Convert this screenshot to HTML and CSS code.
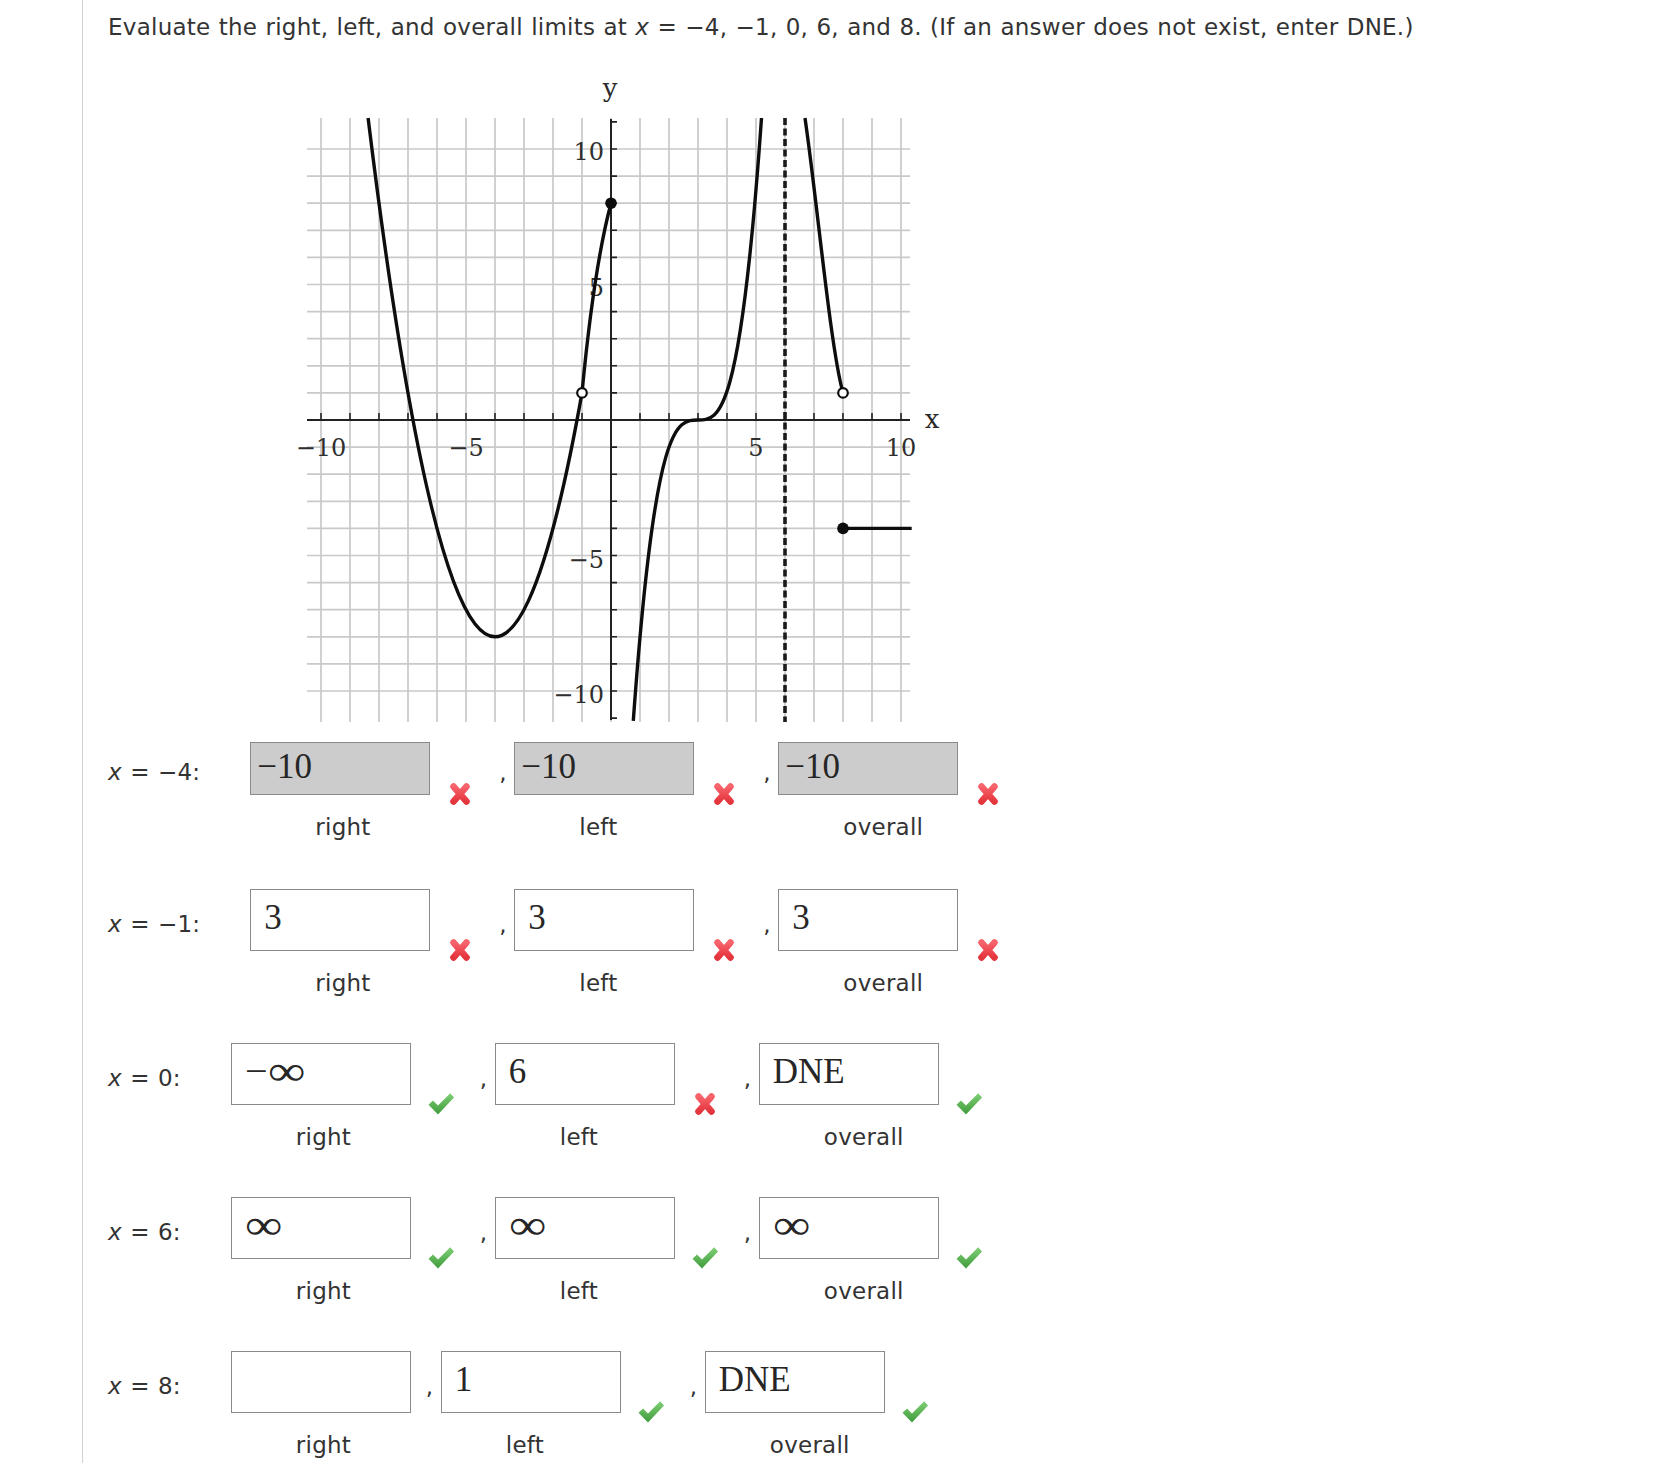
FILE: index.html
```html
<!DOCTYPE html>
<html lang="en">
<head>
<meta charset="utf-8">
<title>Limits</title>
<link rel="stylesheet" href="styles.css">
</head>
<body>
<svg class="defs" width="0" height="0" aria-hidden="true">
  <defs>
    <linearGradient id="gGreen" x1="0" y1="0" x2="0" y2="1">
      <stop offset="0" stop-color="#7fd074"/>
      <stop offset="1" stop-color="#3f9b3c"/>
    </linearGradient>
    <linearGradient id="gRed" x1="0" y1="0" x2="0" y2="1">
      <stop offset="0" stop-color="#f7646b"/>
      <stop offset="1" stop-color="#e4343e"/>
    </linearGradient>
    <symbol id="iX" viewBox="0 0 28 24">
      <path d="M7.5 4.5L20.5 19.5M20.5 4.5L7.5 19.5" fill="none" stroke="url(#gRed)" stroke-width="6.5" stroke-linecap="round"/>
    </symbol>
    <symbol id="iOk" viewBox="0 0 28 24">
      <path d="M1.5 12.8L6 8.6L11 13.6L23.2 1.2L27 5.4L11 22.5Z" fill="url(#gGreen)"/>
    </symbol>
  </defs>
</svg>
<div class="page">
  <p class="prompt">Evaluate the right, left, and overall limits at <i>x</i> = −4, −1, 0, 6, and 8. (If an answer does not exist, enter DNE.)</p>

  <svg class="graph" width="670" height="665" viewBox="0 -10 670 665">
    <path class="grid" d="M41 43V647M70 43V647M99 43V647M128 43V647M157 43V647M186 43V647M215 43V647M244 43V647M273 43V647M302 43V647M331 43V647M360 43V647M389 43V647M418 43V647M447 43V647M476 43V647M505 43V647M534 43V647M563 43V647M592 43V647M621 43V647M27 74H630M27 101.1H630M27 128.2H630M27 155.3H630M27 182.4H630M27 209.5H630M27 236.6H630M27 263.7H630M27 290.8H630M27 317.9H630M27 345H630M27 372.1H630M27 399.2H630M27 426.3H630M27 453.4H630M27 480.5H630M27 507.6H630M27 534.7H630M27 561.8H630M27 588.9H630M27 616H630"/>
    <path class="axes" d="M27 345H630M331 44V645"/>
    <path class="ticks" d="M41 345V338M70 345V338M99 345V338M128 345V338M157 345V338M186 345V338M215 345V338M244 345V338M273 345V338M302 345V338M360 345V338M389 345V338M418 345V338M447 345V338M476 345V338M505 345V338M534 345V338M563 345V338M592 345V338M621 345V338M331 46.9H337M331 74H337M331 101.1H337M331 128.2H337M331 155.3H337M331 182.4H337M331 209.5H337M331 236.6H337M331 263.7H337M331 290.8H337M331 317.9H337M331 372.1H337M331 399.2H337M331 426.3H337M331 453.4H337M331 480.5H337M331 507.6H337M331 534.7H337M331 561.8H337M331 588.9H337M331 616H337M331 643.1H337"/>
    <g class="labels">
      <text x="330" y="21.5" class="axis-name">y</text>
      <text x="652" y="353" class="axis-name">x</text>
      <text x="41" y="381" class="mid">−10</text>
      <text x="186" y="381" class="mid">−5</text>
      <text x="476" y="381" class="mid">5</text>
      <text x="621" y="381" class="mid">10</text>
      <text x="324" y="85" class="end">10</text>
      <text x="324" y="220.5" class="end">5</text>
      <text x="324" y="493" class="end">−5</text>
      <text x="324" y="628" class="end">−10</text>
    </g>
    <line class="asym" x1="505" y1="43" x2="505" y2="647"/>
    <path class="curve" d="M88.1 43Q195.06 917.6 302 317.9"/>
    <path class="curve" d="M302 317.9Q314 192 331 128.2"/>
    <path class="curve" d="M353.3 645.9C374.9 345 396.4 345 418 345C439.2 345 460.3 345 481.5 43"/>
    <path class="curve" d="M525 43C537.7 130.9 550.3 271.8 563 317.9"/>
    <path class="curve" d="M563 453.4H631.7"/>
    <circle class="dot" cx="331" cy="128.2" r="5.8"/>
    <circle class="dot" cx="563" cy="453.4" r="5.8"/>
    <circle class="hole" cx="302" cy="317.9" r="4.8"/>
    <circle class="hole" cx="563" cy="317.9" r="4.8"/>
  </svg>

  <div class="rows">
    <div class="row short">
      <span class="xlabel"><i>x</i> = −4:</span>
      <div class="field"><div class="box disabled">−10</div><div class="sub">right</div></div>
      <svg class="mark"><use href="#iX"/></svg>
      <span class="comma">,</span>
      <div class="field"><div class="box disabled">−10</div><div class="sub">left</div></div>
      <svg class="mark"><use href="#iX"/></svg>
      <span class="comma">,</span>
      <div class="field"><div class="box disabled">−10</div><div class="sub">overall</div></div>
      <svg class="mark"><use href="#iX"/></svg>
    </div>

    <div class="row">
      <span class="xlabel"><i>x</i> = −1:</span>
      <div class="field"><div class="box">3</div><div class="sub">right</div></div>
      <svg class="mark"><use href="#iX"/></svg>
      <span class="comma">,</span>
      <div class="field"><div class="box">3</div><div class="sub">left</div></div>
      <svg class="mark"><use href="#iX"/></svg>
      <span class="comma">,</span>
      <div class="field"><div class="box">3</div><div class="sub">overall</div></div>
      <svg class="mark"><use href="#iX"/></svg>
    </div>

    <div class="row">
      <span class="xlabel"><i>x</i> = 0:</span>
      <div class="field"><div class="box"><span class="minus">−</span><span class="inf">∞</span></div><div class="sub">right</div></div>
      <svg class="mark"><use href="#iOk"/></svg>
      <span class="comma">,</span>
      <div class="field"><div class="box">6</div><div class="sub">left</div></div>
      <svg class="mark"><use href="#iX"/></svg>
      <span class="comma">,</span>
      <div class="field"><div class="box">DNE</div><div class="sub">overall</div></div>
      <svg class="mark"><use href="#iOk"/></svg>
    </div>

    <div class="row">
      <span class="xlabel"><i>x</i> = 6:</span>
      <div class="field"><div class="box"><span class="inf">∞</span></div><div class="sub">right</div></div>
      <svg class="mark"><use href="#iOk"/></svg>
      <span class="comma">,</span>
      <div class="field"><div class="box"><span class="inf">∞</span></div><div class="sub">left</div></div>
      <svg class="mark"><use href="#iOk"/></svg>
      <span class="comma">,</span>
      <div class="field"><div class="box"><span class="inf">∞</span></div><div class="sub">overall</div></div>
      <svg class="mark"><use href="#iOk"/></svg>
    </div>

    <div class="row">
      <span class="xlabel"><i>x</i> = 8:</span>
      <div class="field"><div class="box"></div><div class="sub">right</div></div>
      <span class="comma">,</span>
      <div class="field"><div class="box">1</div><div class="sub">left</div></div>
      <svg class="mark"><use href="#iOk"/></svg>
      <span class="comma">,</span>
      <div class="field"><div class="box">DNE</div><div class="sub">overall</div></div>
      <svg class="mark"><use href="#iOk"/></svg>
    </div>
  </div>
</div>
</body>
</html>
```
FILE: styles.css
```css
* { box-sizing: border-box; }

body {
  margin: 0;
  background: #ffffff;
  color: #333333;
  font-family: "DejaVu Sans", Verdana, sans-serif;
  font-size: 23px;
  letter-spacing: 0.25px;
  word-spacing: 0.7px;
}

.defs { position: absolute; width: 0; height: 0; overflow: hidden; }

.page {
  margin-left: 82px;
  border-left: 1px solid #d2d2d2;
  min-height: 1463px;
  padding: 14px 0 0 25px;
}

.prompt {
  margin: 0;
  line-height: 27px;
  white-space: nowrap;
}

.graph {
  display: block;
  margin: 24px 0 0 172px;
  overflow: visible;
}

.grid { fill: none; stroke: #c9c9c9; stroke-width: 1.7; }
.axes { fill: none; stroke: #222222; stroke-width: 2; }
.ticks { fill: none; stroke: #222222; stroke-width: 1.6; }
.asym { stroke: #1a1a1a; stroke-width: 3.6; stroke-dasharray: 7 3.5; }
.curve { fill: none; stroke: #0d0d0d; stroke-width: 3.4; }
.dot { fill: #0d0d0d; }
.hole { fill: #ffffff; stroke: #0d0d0d; stroke-width: 2.2; }

.labels text {
  font-family: "DejaVu Serif", "Liberation Serif", serif;
  font-size: 24px;
  letter-spacing: 0;
  word-spacing: 0;
  fill: #2e2e2e;
}
.labels .mid { text-anchor: middle; }
.labels .end { text-anchor: end; }
.labels .axis-name { font-size: 26px; text-anchor: middle; fill: #2a2a2a; }

.rows { margin-top: 12px; }

.row {
  --bh: 62px;
  --lh: 56px;
  display: flex;
  align-items: flex-start;
  margin-bottom: 47px;
}
.row.short {
  --bh: 53px;
  --lh: 48px;
  margin-bottom: 49px;
}

.xlabel {
  line-height: var(--bh);
  padding-top: 4px;
  margin-right: 50px;
  white-space: nowrap;
}

.field {
  display: flex;
  flex-direction: column;
  width: 180px;
  flex: none;
}

.box {
  height: var(--bh);
  border: 1px solid #8a8a8a;
  background: #ffffff;
  font-family: "Liberation Serif", serif;
  font-size: 35px;
  letter-spacing: 0;
  word-spacing: 0;
  line-height: var(--lh);
  padding-left: 13px;
  color: #262626;
  white-space: nowrap;
}
.box.disabled {
  background: #cccccc;
  padding-left: 6px;
}
.minus {
  display: inline-block;
  transform: scaleX(1.15);
  transform-origin: left center;
  margin-right: 3px;
}
.inf {
  display: inline-block;
  font-family: "Liberation Serif", serif;
  font-size: 35px;
  transform: scale(1.5, 1.2);
  transform-origin: left center;
}

.sub {
  margin-top: 19px;
  padding-left: 65px;
  line-height: 26px;
}

.mark {
  flex: none;
  width: 28px;
  height: 24px;
  margin: calc(var(--bh) - 13px) 10px 0 16px;
}

.comma {
  flex: none;
  width: 7px;
  line-height: var(--bh);
  padding-top: 4px;
  margin: 0 8px 0 15px;
}
```
